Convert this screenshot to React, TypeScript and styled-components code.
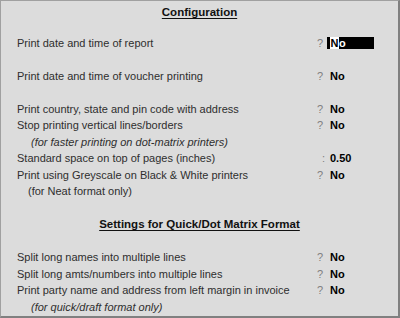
import styled, { createGlobalStyle } from 'styled-components';

const Global = createGlobalStyle`
  html, body { margin: 0; padding: 0; background: #dcdcdc; }
  body { font-family: "Liberation Sans", Arial, sans-serif; }
`;

const Panel = styled.div`
  box-sizing: border-box;
  width: 400px;
  height: 318px;
  background: #dcdcdc;
  border-top: 1px solid #a0a0a0;
  border-left: 1px solid #a0a0a0;
  border-right: 2px solid #808080;
  border-bottom: 2px solid #808080;
  padding: 3px 0 0 16px;
  font-size: 11px;
  color: #2e2e2e;
`;

const Title = styled.div<{ $gap?: number }>`
  height: 16.5px;
  line-height: 16.5px;
  text-align: center;
  font-weight: bold;
  font-size: 11.5px;
  color: #111;
  padding-right: 16px;
  margin-bottom: ${({ $gap }) => $gap ?? 0}px;
  span {
    text-decoration: underline;
    text-underline-offset: 2px;
  }
`;

const Row = styled.div`
  display: grid;
  grid-template-columns: 293px 16px 4px 60px;
  height: 16.5px;
  line-height: 16.5px;
  align-items: center;
`;

const Label = styled.span<{ $indent?: number; $italic?: boolean }>`
  padding-left: ${({ $indent }) => $indent ?? 0}px;
  font-style: ${({ $italic }) => ($italic ? 'italic' : 'normal')};
  white-space: nowrap;
`;

const Sep = styled.span<{ $colon?: boolean }>`
  color: #808080;
  text-align: right;
  padding-right: ${({ $colon }) => ($colon ? 1 : 3)}px;
`;

const Value = styled.span<{ $active?: boolean }>`
  grid-column: 4;
  font-weight: bold;
  color: #000;
  ${({ $active }) =>
    $active &&
    `
    background: #000;
    color: #fff;
    width: 44px;
    height: 12px;
    line-height: 12px;
    margin-left: -3px;
    padding-left: 3px;
  `}
`;

const Cursor = styled.span`
  background: #fff;
  color: #000;
  display: inline-block;
  padding: 0 0.5px;
`;

const Blank = styled.div`
  height: 16.5px;
`;

type Item =
  | { kind: 'row'; label: string; sep?: string; value?: string; indent?: number; italic?: boolean; active?: boolean }
  | { kind: 'blank' };

const first: Item[] = [
  { kind: 'row', label: 'Print date and time of report', sep: '?', value: 'No', active: true },
  { kind: 'blank' },
  { kind: 'row', label: 'Print date and time of voucher printing', sep: '?', value: 'No' },
  { kind: 'blank' },
  { kind: 'row', label: 'Print country, state and pin code with address', sep: '?', value: 'No' },
  { kind: 'row', label: 'Stop printing vertical lines/borders', sep: '?', value: 'No' },
  { kind: 'row', label: '(for faster printing on dot-matrix printers)', indent: 14, italic: true },
  { kind: 'row', label: 'Standard space on top of pages (inches)', sep: ':', value: '0.50' },
  { kind: 'row', label: 'Print using Greyscale on Black & White printers', sep: '?', value: 'No' },
  { kind: 'row', label: '(for Neat format only)', indent: 11 },
  { kind: 'blank' },
];

const second: Item[] = [
  { kind: 'blank' },
  { kind: 'row', label: 'Split long names into multiple lines', sep: '?', value: 'No' },
  { kind: 'row', label: 'Split long amts/numbers into multiple lines', sep: '?', value: 'No' },
  { kind: 'row', label: 'Print party name and address from left margin in invoice', sep: '?', value: 'No' },
  { kind: 'row', label: '(for quick/draft format only)', indent: 14, italic: true },
];

function renderItems(items: Item[]) {
  return items.map((it, i) => {
    if (it.kind === 'blank') return <Blank key={i} />;
    return (
      <Row key={i}>
        <Label $indent={it.indent} $italic={it.italic}>{it.label}</Label>
        <Sep $colon={it.sep === ':'}>{it.sep ?? ''}</Sep>
        {it.value && (
          <Value $active={it.active}>
            {it.active ? (
              <>
                <Cursor>{it.value[0]}</Cursor>
                {it.value.slice(1)}
              </>
            ) : (
              it.value
            )}
          </Value>
        )}
      </Row>
    );
  });
}

export default function App() {
  return (
    <>
      <Global />
      <Panel>
        <Title $gap={14}>
          <span>Configuration</span>
        </Title>
        {renderItems(first)}
        <Title>
          <span>Settings for Quick/Dot Matrix Format</span>
        </Title>
        {renderItems(second)}
      </Panel>
    </>
  );
}
